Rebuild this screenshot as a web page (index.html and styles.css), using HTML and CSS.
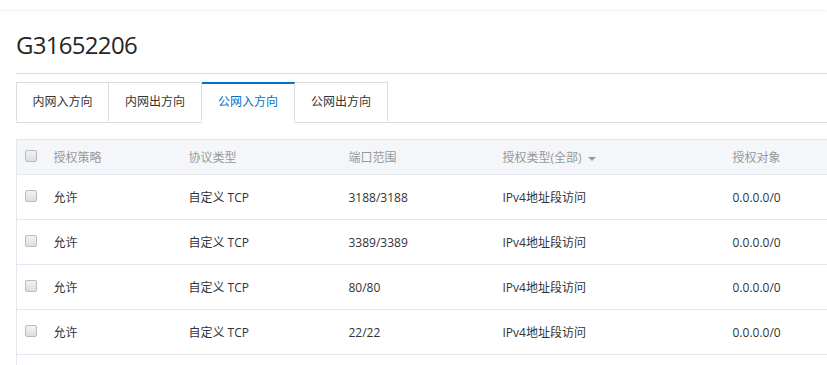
FILE: index.html
```html
<!DOCTYPE html>
<html lang="zh-CN">
<head>
    <meta charset="UTF-8">
    <title>G31652206 安全组规则</title>
    <link rel="stylesheet" href="styles.css">
</head>
<body>
    <div class="topbar"></div>

    <main class="page">
        <h1 class="title">G31652206</h1>

        <!-- 方向切换 -->
        <nav class="tabs">
            <a class="tab">内网入方向</a>
            <a class="tab">内网出方向</a>
            <a class="tab tab-active">公网入方向</a>
            <a class="tab">公网出方向</a>
        </nav>

        <table class="rules">
            <colgroup>
                <col class="c-check">
                <col class="c-policy">
                <col class="c-proto">
                <col class="c-port">
                <col class="c-type">
                <col class="c-target">
            </colgroup>
            <thead>
                <tr>
                    <th><span class="checkbox"></span></th>
                    <th>授权策略</th>
                    <th>协议类型</th>
                    <th>端口范围</th>
                    <th>授权类型(全部) <span class="caret"></span></th>
                    <th>授权对象</th>
                </tr>
            </thead>
            <tbody>
                <tr>
                    <td><span class="checkbox"></span></td>
                    <td>允许</td>
                    <td>自定义 TCP</td>
                    <td>3188/3188</td>
                    <td>IPv4地址段访问</td>
                    <td>0.0.0.0/0</td>
                </tr>
                <tr>
                    <td><span class="checkbox"></span></td>
                    <td>允许</td>
                    <td>自定义 TCP</td>
                    <td>3389/3389</td>
                    <td>IPv4地址段访问</td>
                    <td>0.0.0.0/0</td>
                </tr>
                <tr>
                    <td><span class="checkbox"></span></td>
                    <td>允许</td>
                    <td>自定义 TCP</td>
                    <td>80/80</td>
                    <td>IPv4地址段访问</td>
                    <td>0.0.0.0/0</td>
                </tr>
                <tr>
                    <td><span class="checkbox"></span></td>
                    <td>允许</td>
                    <td>自定义 TCP</td>
                    <td>22/22</td>
                    <td>IPv4地址段访问</td>
                    <td>0.0.0.0/0</td>
                </tr>
                <tr class="row-partial">
                    <td></td><td></td><td></td><td></td><td></td><td></td>
                </tr>
            </tbody>
        </table>
    </main>
</body>
</html>
```

FILE: styles.css
```css
:root {
    --font-main: "Open Sans", "Noto Sans CJK SC", sans-serif;
    --color-text: #333;
    --color-muted: #999;
    --color-brand: #0070cc;
    --color-line: #e3e8ee;
    --color-tab-line: #dcdcdc;
    --color-head: #f4f6f9;
}

body {
    margin: 0;
    font-family: var(--font-main);
    font-size: 12px;
    color: var(--color-text);
    background: #fff;
    overflow: hidden;
}

/* 顶部阴影条 */
.topbar {
    height: 9px;
    background: #fff;
    box-shadow: 0 1px 6px rgba(0, 0, 0, 0.07);
    position: relative;
}

.page {
    padding-left: 16px;
}

.title {
    margin: 0;
    padding-top: 23px;
    height: 41px;
    font-size: 24px;
    font-weight: 400;
    line-height: 26px;
    letter-spacing: -0.7px;
    color: #262626;
    border-bottom: 1px solid var(--color-tab-line);
}

/* 标签页 */
.tabs {
    display: flex;
    margin-top: 8px;
    border-bottom: 1px solid var(--color-tab-line);
}

.tab {
    width: 92px;
    height: 38px;
    line-height: 38px;
    text-align: center;
    border: 1px solid var(--color-tab-line);
    border-bottom: none;
    margin-bottom: -1px;
    border-left: none;
    background: #fff;
    color: var(--color-text);
    cursor: pointer;
}

.tab:first-child {
    width: 91px;
    border-left: 1px solid var(--color-tab-line);
}

.tab-active {
    border-top: 2px solid var(--color-brand);
    height: 38px;
    line-height: 36px;
    color: var(--color-brand);
    border-bottom: 1px solid #fff;
}

/* 规则表格 */
.rules {
    margin-top: 16px;
    width: 900px;
    border-collapse: collapse;
    table-layout: fixed;
    border-left: 1px solid var(--color-line);
    border-top: 1px solid var(--color-line);
}

.c-check { width: 37px; }
.c-policy { width: 135px; }
.c-proto { width: 160px; }
.c-port { width: 154px; }
.c-type { width: 230px; }
.c-target { width: 184px; }

.rules th,
.rules td {
    text-align: left;
    padding: 0;
    border-bottom: 1px solid var(--color-line);
    white-space: nowrap;
}

.rules th {
    height: 34px;
    background: var(--color-head);
    font-weight: 400;
    color: var(--color-muted);
}

.rules td {
    height: 44px;
}

.rules th:first-child,
.rules td:first-child {
    padding-left: 8px;
}

.row-partial td {
    border-bottom: none;
}

.checkbox {
    display: inline-block;
    width: 10px;
    height: 10px;
    border: 1px solid #bbb;
    border-radius: 2px;
    background: linear-gradient(#f2f2f2, #dedede);
    vertical-align: middle;
    position: relative;
    top: -2px;
}

.caret {
    display: inline-block;
    width: 0;
    height: 0;
    margin-left: 3px;
    border-left: 4px solid transparent;
    border-right: 4px solid transparent;
    border-top: 4px solid #999;
    vertical-align: middle;
}
```
